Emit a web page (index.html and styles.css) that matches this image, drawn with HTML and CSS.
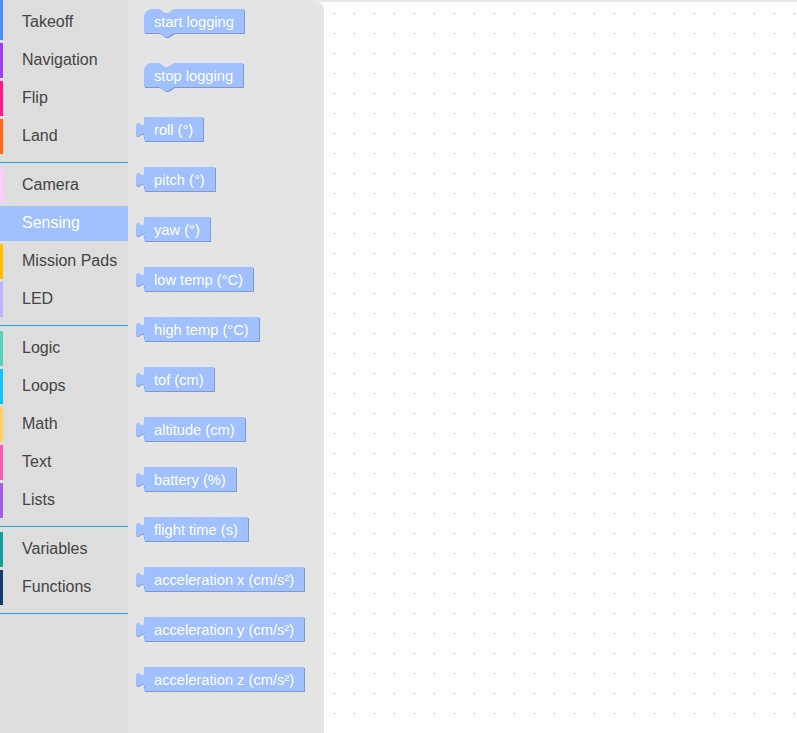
FILE: index.html
```html
<!DOCTYPE html>
<html lang="en">
<head>
  <meta charset="UTF-8" />
  <title>Drone Blocks</title>
  <link rel="stylesheet" href="styles.css">
</head>
<body>
  <div class="app">
    <!-- Category list -->
    <div class="toolbox">
      <div class="cat c-takeoff">Takeoff</div>
      <div class="cat c-nav">Navigation</div>
      <div class="cat c-flip">Flip</div>
      <div class="cat c-land">Land</div>
      <div class="sep"></div>
      <div class="cat c-camera">Camera</div>
      <div class="cat selected">Sensing</div>
      <div class="cat c-pads">Mission Pads</div>
      <div class="cat c-led">LED</div>
      <div class="sep"></div>
      <div class="cat c-logic">Logic</div>
      <div class="cat c-loops">Loops</div>
      <div class="cat c-math">Math</div>
      <div class="cat c-text">Text</div>
      <div class="cat c-lists">Lists</div>
      <div class="sep"></div>
      <div class="cat c-vars">Variables</div>
      <div class="cat c-funcs">Functions</div>
      <div class="sep"></div>
    </div>

    <div class="workspace">
      <svg class="grid" width="100%" height="100%">
        <defs>
          <pattern id="dots" x="6" y="11" width="20" height="20" patternUnits="userSpaceOnUse">
            <rect width="1" height="1" fill="#999"/>
          </pattern>
        </defs>
        <rect width="100%" height="100%" fill="url(#dots)"/>
      </svg>

      <!-- Flyout with the Sensing blocks -->
      <div class="flyout">
        <svg class="stmt" width="110" height="30" viewBox="0 0 110 30">
          <path class="dark" transform="translate(1,1)" d="M0,8 A8,8 0 0,1 8,0 H15 l6,4 3,0 6,-4 H100 V24 H30 l-6,4 -3,0 -6,-4 H0 Z"/>
          <path class="body" d="M0,8 A8,8 0 0,1 8,0 H15 l6,4 3,0 6,-4 H100 V24 H30 l-6,4 -3,0 -6,-4 H0 Z"/>
          <text x="10" y="17.6">start logging</text>
        </svg>
        <svg class="stmt" width="110" height="30" viewBox="0 0 110 30">
          <path class="dark" transform="translate(1,1)" d="M0,8 A8,8 0 0,1 8,0 H15 l6,4 3,0 6,-4 H99 V24 H30 l-6,4 -3,0 -6,-4 H0 Z"/>
          <path class="body" d="M0,8 A8,8 0 0,1 8,0 H15 l6,4 3,0 6,-4 H99 V24 H30 l-6,4 -3,0 -6,-4 H0 Z"/>
          <text x="10" y="17.6">stop logging</text>
        </svg>

        <div class="block"><svg class="tab" width="9" height="16" viewBox="0 0 9 16"><path class="dark" transform="translate(0,1)" d="M8,15 C8,5 0,23 0,7.5 C0,-8 8,10 8,0 H9 V15 Z"/><path class="body" d="M8,15 C8,5 0,23 0,7.5 C0,-8 8,10 8,0 H9 V15 Z"/></svg>roll (°)</div>
        <div class="block"><svg class="tab" width="9" height="16" viewBox="0 0 9 16"><path class="dark" transform="translate(0,1)" d="M8,15 C8,5 0,23 0,7.5 C0,-8 8,10 8,0 H9 V15 Z"/><path class="body" d="M8,15 C8,5 0,23 0,7.5 C0,-8 8,10 8,0 H9 V15 Z"/></svg>pitch (°)</div>
        <div class="block"><svg class="tab" width="9" height="16" viewBox="0 0 9 16"><path class="dark" transform="translate(0,1)" d="M8,15 C8,5 0,23 0,7.5 C0,-8 8,10 8,0 H9 V15 Z"/><path class="body" d="M8,15 C8,5 0,23 0,7.5 C0,-8 8,10 8,0 H9 V15 Z"/></svg>yaw (°)</div>
        <div class="block"><svg class="tab" width="9" height="16" viewBox="0 0 9 16"><path class="dark" transform="translate(0,1)" d="M8,15 C8,5 0,23 0,7.5 C0,-8 8,10 8,0 H9 V15 Z"/><path class="body" d="M8,15 C8,5 0,23 0,7.5 C0,-8 8,10 8,0 H9 V15 Z"/></svg>low temp (°C)</div>
        <div class="block"><svg class="tab" width="9" height="16" viewBox="0 0 9 16"><path class="dark" transform="translate(0,1)" d="M8,15 C8,5 0,23 0,7.5 C0,-8 8,10 8,0 H9 V15 Z"/><path class="body" d="M8,15 C8,5 0,23 0,7.5 C0,-8 8,10 8,0 H9 V15 Z"/></svg>high temp (°C)</div>
        <div class="block"><svg class="tab" width="9" height="16" viewBox="0 0 9 16"><path class="dark" transform="translate(0,1)" d="M8,15 C8,5 0,23 0,7.5 C0,-8 8,10 8,0 H9 V15 Z"/><path class="body" d="M8,15 C8,5 0,23 0,7.5 C0,-8 8,10 8,0 H9 V15 Z"/></svg>tof (cm)</div>
        <div class="block"><svg class="tab" width="9" height="16" viewBox="0 0 9 16"><path class="dark" transform="translate(0,1)" d="M8,15 C8,5 0,23 0,7.5 C0,-8 8,10 8,0 H9 V15 Z"/><path class="body" d="M8,15 C8,5 0,23 0,7.5 C0,-8 8,10 8,0 H9 V15 Z"/></svg>altitude (cm)</div>
        <div class="block"><svg class="tab" width="9" height="16" viewBox="0 0 9 16"><path class="dark" transform="translate(0,1)" d="M8,15 C8,5 0,23 0,7.5 C0,-8 8,10 8,0 H9 V15 Z"/><path class="body" d="M8,15 C8,5 0,23 0,7.5 C0,-8 8,10 8,0 H9 V15 Z"/></svg>battery (%)</div>
        <div class="block"><svg class="tab" width="9" height="16" viewBox="0 0 9 16"><path class="dark" transform="translate(0,1)" d="M8,15 C8,5 0,23 0,7.5 C0,-8 8,10 8,0 H9 V15 Z"/><path class="body" d="M8,15 C8,5 0,23 0,7.5 C0,-8 8,10 8,0 H9 V15 Z"/></svg>flight time (s)</div>
        <div class="block"><svg class="tab" width="9" height="16" viewBox="0 0 9 16"><path class="dark" transform="translate(0,1)" d="M8,15 C8,5 0,23 0,7.5 C0,-8 8,10 8,0 H9 V15 Z"/><path class="body" d="M8,15 C8,5 0,23 0,7.5 C0,-8 8,10 8,0 H9 V15 Z"/></svg>acceleration x (cm/s²)</div>
        <div class="block"><svg class="tab" width="9" height="16" viewBox="0 0 9 16"><path class="dark" transform="translate(0,1)" d="M8,15 C8,5 0,23 0,7.5 C0,-8 8,10 8,0 H9 V15 Z"/><path class="body" d="M8,15 C8,5 0,23 0,7.5 C0,-8 8,10 8,0 H9 V15 Z"/></svg>acceleration y (cm/s²)</div>
        <div class="block"><svg class="tab" width="9" height="16" viewBox="0 0 9 16"><path class="dark" transform="translate(0,1)" d="M8,15 C8,5 0,23 0,7.5 C0,-8 8,10 8,0 H9 V15 Z"/><path class="body" d="M8,15 C8,5 0,23 0,7.5 C0,-8 8,10 8,0 H9 V15 Z"/></svg>acceleration z (cm/s²)</div>
      </div>
    </div>
  </div>
</body>
</html>
```

FILE: styles.css
```css
/* Block editor: toolbox + flyout + dotted workspace */
body {
  margin: 0;
  font-family: "Liberation Sans", Arial, sans-serif;
  background: #fff;
  overflow: hidden;
}
.app {
  display: flex;
  height: 100vh;
}

/* Toolbox categories */
.toolbox {
  width: 128px;
  flex: none;
  background: #ddd;
}
.cat {
  height: 35px;
  line-height: 33px;
  margin-bottom: 3px;
  padding-left: 19px;
  border-left: 3px solid transparent;
  font-size: 16px;
  color: #444;
  white-space: nowrap;
}
.cat:first-child {
  padding-top: 5px;
}
.cat.selected {
  background: #a0c0ff;
  border-left-color: #a0c0ff;
  color: #fff;
}
.sep {
  height: 1px;
  margin: 8px 0 5px;
  background: #1ea5dd;
}
.c-takeoff { border-left-color: #4a8fff; }
.c-nav     { border-left-color: #9b3ff2; }
.c-flip    { border-left-color: #ff1a8a; }
.c-land    { border-left-color: #ff661a; }
.c-camera  { border-left-color: #ffccff; }
.c-pads    { border-left-color: #ffbf00; }
.c-led     { border-left-color: #bfb3ff; }
.c-logic   { border-left-color: #5bd0bd; }
.c-loops   { border-left-color: #14c3f5; }
.c-math    { border-left-color: #ffd066; }
.c-text    { border-left-color: #f45db1; }
.c-lists   { border-left-color: #a45ee5; }
.c-vars    { border-left-color: #129c9c; }
.c-funcs   { border-left-color: #173b6b; }

/* Workspace */
.workspace {
  flex: 1;
  position: relative;
  border-top: 2px solid #e6e6e6;
  background: #fff;
}
.grid {
  position: absolute;
  top: 0;
  left: 0;
  display: block;
}
.flyout {
  position: absolute;
  top: 0;
  left: 0;
  bottom: 0;
  width: 196px;
  box-sizing: border-box;
  padding: 7px 0 0 8px;
  background: rgba(221, 221, 221, 0.8);
  border-top-right-radius: 8px;
  display: flex;
  flex-direction: column;
  align-items: flex-start;
}

/* Blocks */
.stmt {
  display: block;
  margin: 0 0 24px 8px;
  overflow: visible;
}
.stmt text {
  font-family: "Liberation Sans", Arial, sans-serif;
  font-size: 11pt;
  fill: #fff;
}
.body { fill: #a0c0ff; }
.dark { fill: #809acc; }

.block {
  position: relative;
  height: 24px;
  line-height: 26px;
  margin: 0 0 26px 8px;
  padding: 0 10px;
  background: #a0c0ff;
  box-shadow: 1px 1px 0 #809acc;
  color: #fff;
  font-size: 11pt;
  white-space: nowrap;
}
.tab {
  position: absolute;
  left: -8px;
  top: 5px;
  overflow: visible;
}
```
